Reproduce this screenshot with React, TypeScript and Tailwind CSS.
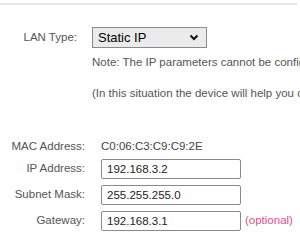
import React from 'react';

const font = { fontFamily: '"Liberation Sans", Arial, sans-serif' };

const Field: React.FC<{ label: string; value: string; optional?: boolean }> = ({ label, value, optional }) => (
  <div className="flex items-center h-[26px]">
    <div className="w-[85px] text-right text-[11.5px] text-[#555]">{label}</div>
    <input
      readOnly
      value={value}
      className="ml-[16px] w-[140px] h-[20px] border border-[#8a8a8a] rounded-[2px] px-[5px] text-[11.5px] text-[#222] outline-none bg-white"
      style={font}
    />
    {optional && <span className="ml-[4px] text-[11.5px] text-[#e0508a]">(optional)</span>}
  </div>
);

export default function App() {
  return (
    <div className="w-[300px] h-[241px] overflow-hidden bg-white whitespace-nowrap" style={font}>
      <div className="mt-[3px] w-[297px] border-t-2 border-[#e6e6e6]" />
      <div className="flex items-center mt-[22px] h-[21px]">
        <div className="w-[77px] text-right text-[11.5px] text-[#555]">LAN Type:</div>
        <div className="ml-[15px] w-[115px] h-[21px] border border-[#8a8a8a] bg-[#ebebeb] flex items-center justify-between pl-[5px] pr-[7px]">
          <span className="text-[13px] text-black">Static IP</span>
          <svg width="10" height="7" viewBox="0 0 10 7">
            <path d="M1.5 1.5 L5 5 L8.5 1.5" stroke="#111" strokeWidth="2" fill="none" />
          </svg>
        </div>
      </div>
      <div className="ml-[92px] mt-[7px] text-[11.5px] text-[#555] leading-[14px]">
        Note: The IP parameters cannot be configured when in this mode.
      </div>
      <div className="ml-[92px] mt-[17px] text-[11.5px] text-[#555] leading-[14px]">
        (In this situation the device will help you configure.)
      </div>
      <div className="flex items-center mt-[39px] h-[16px]">
        <div className="w-[85px] text-right text-[11.5px] text-[#555]">MAC Address:</div>
        <div className="ml-[16px] text-[11.5px] text-[#444]">C0:06:C3:C9:C9:2E</div>
      </div>
      <div className="mt-[1px]">
        <Field label="IP Address:" value="192.168.3.2" />
        <Field label="Subnet Mask:" value="255.255.255.0" />
        <Field label="Gateway:" value="192.168.3.1" optional />
      </div>
    </div>
  );
}
